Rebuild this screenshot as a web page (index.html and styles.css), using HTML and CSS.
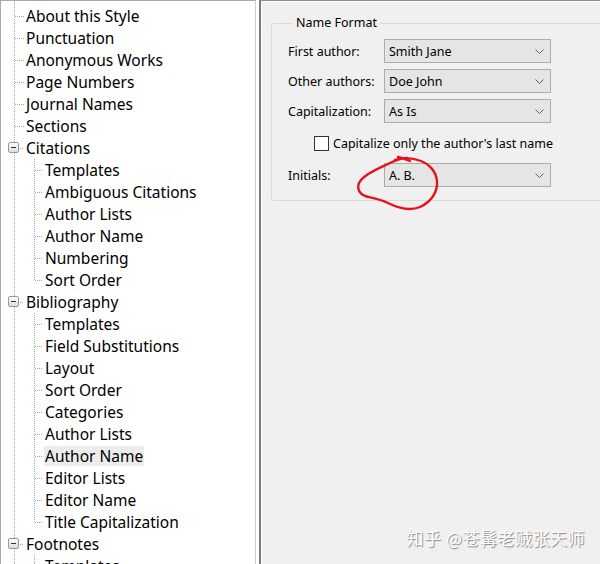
FILE: index.html
```html
<!DOCTYPE html>
<html>
<head>
<meta charset="utf-8">
<link rel="stylesheet" href="styles.css">
</head>
<body>
<div class="window">
  <div class="tree-pane">
    <ul class="tree">
      <li><div class="row"><span class="label">About this Style</span></div></li>
      <li><div class="row"><span class="label">Punctuation</span></div></li>
      <li><div class="row"><span class="label">Anonymous Works</span></div></li>
      <li><div class="row"><span class="label">Page Numbers</span></div></li>
      <li><div class="row"><span class="label">Journal Names</span></div></li>
      <li><div class="row"><span class="label">Sections</span></div></li>
      <li>
        <div class="row branch"><span class="toggle"></span><span class="label">Citations</span></div>
        <ul>
          <li><div class="row"><span class="label">Templates</span></div></li>
          <li><div class="row"><span class="label">Ambiguous Citations</span></div></li>
          <li><div class="row"><span class="label">Author Lists</span></div></li>
          <li><div class="row"><span class="label">Author Name</span></div></li>
          <li><div class="row"><span class="label">Numbering</span></div></li>
          <li><div class="row"><span class="label">Sort Order</span></div></li>
        </ul>
      </li>
      <li>
        <div class="row branch"><span class="toggle"></span><span class="label">Bibliography</span></div>
        <ul>
          <li><div class="row"><span class="label">Templates</span></div></li>
          <li><div class="row"><span class="label">Field Substitutions</span></div></li>
          <li><div class="row"><span class="label">Layout</span></div></li>
          <li><div class="row"><span class="label">Sort Order</span></div></li>
          <li><div class="row"><span class="label">Categories</span></div></li>
          <li><div class="row"><span class="label">Author Lists</span></div></li>
          <li><div class="row"><span class="label selected">Author Name</span></div></li>
          <li><div class="row"><span class="label">Editor Lists</span></div></li>
          <li><div class="row"><span class="label">Editor Name</span></div></li>
          <li><div class="row"><span class="label">Title Capitalization</span></div></li>
        </ul>
      </li>
      <li>
        <div class="row branch"><span class="toggle"></span><span class="label">Footnotes</span></div>
        <ul>
          <li><div class="row"><span class="label">Templates</span></div></li>
        </ul>
      </li>
    </ul>
  </div>

  <div class="props">
    <fieldset class="group">
      <legend>Name Format</legend>
      <div class="form">
        <span class="field-label">First author:</span>
        <div class="select"><span>Smith Jane</span><svg class="chevron" viewBox="0 0 9 5"><path d="M0.5 0.5 L4.5 4.5 L8.5 0.5"/></svg></div>

        <span class="field-label">Other authors:</span>
        <div class="select"><span>Doe John</span><svg class="chevron" viewBox="0 0 9 5"><path d="M0.5 0.5 L4.5 4.5 L8.5 0.5"/></svg></div>

        <span class="field-label">Capitalization:</span>
        <div class="select"><span>As Is</span><svg class="chevron" viewBox="0 0 9 5"><path d="M0.5 0.5 L4.5 4.5 L8.5 0.5"/></svg></div>

        <label class="check-row"><span class="checkbox"></span>Capitalize only the author's last name</label>

        <span class="field-label">Initials:</span>
        <div class="select"><span>A. B.</span><svg class="chevron" viewBox="0 0 9 5"><path d="M0.5 0.5 L4.5 4.5 L8.5 0.5"/></svg></div>
      </div>
    </fieldset>
  </div>
</div>

<!-- pen mark round the initials box -->
<svg class="ink" viewBox="0 0 600 564" width="600" height="564">
  <path d="M395 160 C404 157 413 158 421 161 C429 164 436 171 437 181 C438 192 431 202 420 207 C410 211 398 208 388 203 C380 199 372 198 365 196 C358 193 356 186 361 180 C368 172 380 168 390 163 C396 160 402 158 407 158"/>
  <path d="M398 157 C402 158 406 159 410 161"/>
</svg>

<div class="watermark">知乎 @苍髯老贼张天师</div>
</body>
</html>
```

FILE: styles.css
```css
html, body {
  margin: 0;
  padding: 0;
}

body {
  position: relative;
  width: 600px;
  height: 564px;
  overflow: hidden;
  background: #fff;
  font-family: "Noto Sans", "Liberation Sans", sans-serif;
  color: #000;
}

.window {
  display: flex;
  height: 564px;
}

/* left: outline tree */
.tree-pane {
  width: 254px;
  height: 564px;
  background: #fff;
  border-top: 1px solid #a9a9a9;
  border-left: 1px solid #a9a9a9;
  border-right: 1px solid #cfcfcf;
  overflow: hidden;
  flex: none;
}

.tree,
.tree ul {
  list-style: none;
  margin: 0;
  padding: 0;
}

.tree {
  padding-top: 4px;
  font-size: 15.5px;
  background-image: repeating-linear-gradient(to bottom, #a6a6a6 0 1px, transparent 1px 2px);
  background-size: 1px 100%;
  background-position: 13px 0;
  background-repeat: no-repeat;
}

.tree ul {
  background-image: repeating-linear-gradient(to bottom, #a6a6a6 0 1px, transparent 1px 2px);
  background-size: 1px calc(100% - 11px);
  background-position: 33px 0;
  background-repeat: no-repeat;
}

.row {
  position: relative;
  height: 22px;
  display: flex;
  align-items: center;
  padding-left: 24px;
  white-space: nowrap;
}

.row::before {
  content: "";
  position: absolute;
  left: 14px;
  top: 11px;
  width: 9px;
  height: 1px;
  background: repeating-linear-gradient(to right, #a6a6a6 0 1px, transparent 1px 2px);
}

.tree ul .row {
  padding-left: 43px;
}

.tree ul .row::before {
  left: 34px;
  width: 8px;
}

.branch::before {
  left: 19px;
  width: 4px;
}

.label {
  padding: 0 1px;
  line-height: 20px;
}

.label.selected {
  background: #ececec;
}

.toggle {
  position: absolute;
  left: 7px;
  top: 5px;
  width: 9px;
  height: 9px;
  border: 1px solid #8f9aa8;
  border-radius: 2px;
  background: linear-gradient(#fdfdfd, #dcdcdc);
  z-index: 1;
}

.toggle::after {
  content: "";
  position: absolute;
  left: 2px;
  top: 4px;
  width: 5px;
  height: 1px;
  background: #333;
}

/* right: property page */
.props {
  flex: 1;
  margin-left: 3px;
  height: 564px;
  box-sizing: border-box;
  background: #f0f0f0;
  border-top: 1px solid #8c8c8c;
  border-left: 2px solid #7c7c7c;
  box-shadow: inset 1px 1px 0 #fff;
  padding: 14px 0 0 10px;
  overflow: hidden;
  font-size: 12.5px;
}

.group {
  width: 340px;
  margin: 0;
  padding: 8px 0 13px 16px;
  border: 1px solid #dcdcdc;
  border-radius: 2px;
}

.group legend {
  padding: 0 3px;
  margin-left: 5px;
  line-height: 16px;
}

.form {
  display: grid;
  grid-template-columns: 96px 167px;
  row-gap: 6px;
  align-items: center;
}

.select {
  height: 24px;
  box-sizing: border-box;
  border: 1px solid #adadad;
  background: #e5e5e5;
  display: flex;
  align-items: center;
  justify-content: space-between;
  padding: 0 6px 0 4px;
}

.chevron {
  width: 9px;
  height: 5px;
  fill: none;
  stroke: #606060;
  stroke-width: 1;
}

.check-row {
  grid-column: 1 / 3;
  display: flex;
  align-items: center;
  gap: 4px;
  height: 15px;
  margin: 7px 0 6px 26px;
  white-space: nowrap;
}

.checkbox {
  width: 13px;
  height: 13px;
  flex: none;
  border: 1px solid #333;
  background: #fff;
}

.ink {
  position: absolute;
  left: 0;
  top: 0;
  pointer-events: none;
  fill: none;
  stroke: #e4141c;
  stroke-width: 2.4;
  stroke-linecap: round;
  stroke-linejoin: round;
}

.watermark {
  position: absolute;
  right: 15px;
  bottom: 14px;
  font-family: "Noto Sans CJK SC", sans-serif;
  font-size: 17px;
  color: #fff;
  text-shadow: 1px 1px 1px rgba(0, 0, 0, 0.45);
  letter-spacing: 0.5px;
}
```
